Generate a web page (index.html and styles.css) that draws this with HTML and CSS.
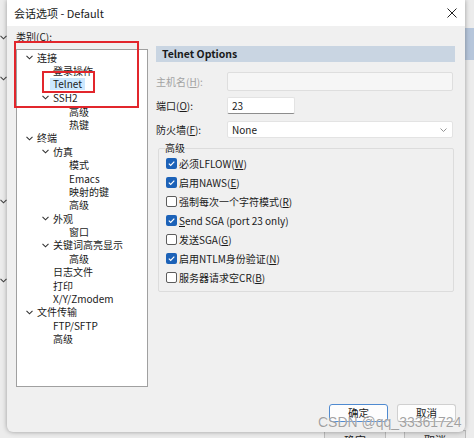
FILE: index.html
```html
<!DOCTYPE html>
<html lang="zh-CN">
<head>
    <meta charset="UTF-8">
    <meta name="viewport" content="width=device-width, initial-scale=1.0">
    <title>会话选项 - Default</title>
    <link rel="stylesheet" href="styles.css">
</head>
<body>
    <!-- window behind the dialog -->
    <div class="parent">
        <div class="parent_side">
            <svg class="pchev" style="margin-top:35px" width="7" height="5" viewBox="0 0 7 5"><path d="M0.5 0.8 L3.5 3.8 L6.5 0.8" fill="none" stroke="#444" stroke-width="1.1"/></svg>
            <svg class="pchev" style="margin-top:36px" width="7" height="5" viewBox="0 0 7 5"><path d="M0.5 0.8 L3.5 3.8 L6.5 0.8" fill="none" stroke="#444" stroke-width="1.1"/></svg>
            <svg class="pchev" style="margin-top:118px" width="7" height="5" viewBox="0 0 7 5"><path d="M0.5 0.8 L3.5 3.8 L6.5 0.8" fill="none" stroke="#444" stroke-width="1.1"/></svg>
            <svg class="pchev" style="margin-top:74px" width="7" height="5" viewBox="0 0 7 5"><path d="M0.5 0.8 L3.5 3.8 L6.5 0.8" fill="none" stroke="#444" stroke-width="1.1"/></svg>
        </div>
        <div class="parent_right">
            <div class="parent_band"></div>
        </div>
        <div class="parent_buttons">
            <span class="pbtn">确定</span>
            <span class="pbtn">取消</span>
        </div>
    </div>

    <div class="dialog">
        <div class="titlebar">
            <span class="title">会话选项 - Default</span>
            <svg class="close" width="10" height="10" viewBox="0 0 10 10"><path d="M0.5 0.5 L9.5 9.5 M9.5 0.5 L0.5 9.5" stroke="#222" stroke-width="1"/></svg>
        </div>

        <div class="body">
            <div class="left_col">
                <div class="cat_label">类别(<u>C</u>):</div>
                <div class="tree">
                    <div class="row lv0"><span class="twisty"><svg width="7" height="5" viewBox="0 0 7 5"><path d="M0.5 0.8 L3.5 3.8 L6.5 0.8" fill="none" stroke="#333" stroke-width="1.1"/></svg></span>连接</div>
                    <div class="row lv1"><span class="twisty"></span>登录操作</div>
                    <div class="row lv1"><span class="twisty"></span><span class="selected">Telnet</span></div>
                    <div class="row lv1"><span class="twisty"><svg width="7" height="5" viewBox="0 0 7 5"><path d="M0.5 0.8 L3.5 3.8 L6.5 0.8" fill="none" stroke="#333" stroke-width="1.1"/></svg></span>SSH2</div>
                    <div class="row lv2"><span class="twisty"></span>高级</div>
                    <div class="row lv2"><span class="twisty"></span>热键</div>
                    <div class="row lv0"><span class="twisty"><svg width="7" height="5" viewBox="0 0 7 5"><path d="M0.5 0.8 L3.5 3.8 L6.5 0.8" fill="none" stroke="#333" stroke-width="1.1"/></svg></span>终端</div>
                    <div class="row lv1"><span class="twisty"><svg width="7" height="5" viewBox="0 0 7 5"><path d="M0.5 0.8 L3.5 3.8 L6.5 0.8" fill="none" stroke="#333" stroke-width="1.1"/></svg></span>仿真</div>
                    <div class="row lv2"><span class="twisty"></span>模式</div>
                    <div class="row lv2"><span class="twisty"></span>Emacs</div>
                    <div class="row lv2"><span class="twisty"></span>映射的键</div>
                    <div class="row lv2"><span class="twisty"></span>高级</div>
                    <div class="row lv1"><span class="twisty"><svg width="7" height="5" viewBox="0 0 7 5"><path d="M0.5 0.8 L3.5 3.8 L6.5 0.8" fill="none" stroke="#333" stroke-width="1.1"/></svg></span>外观</div>
                    <div class="row lv2"><span class="twisty"></span>窗口</div>
                    <div class="row lv1"><span class="twisty"><svg width="7" height="5" viewBox="0 0 7 5"><path d="M0.5 0.8 L3.5 3.8 L6.5 0.8" fill="none" stroke="#333" stroke-width="1.1"/></svg></span>关键词高亮显示</div>
                    <div class="row lv2"><span class="twisty"></span>高级</div>
                    <div class="row lv1"><span class="twisty"></span>日志文件</div>
                    <div class="row lv1"><span class="twisty"></span>打印</div>
                    <div class="row lv1"><span class="twisty"></span>X/Y/Zmodem</div>
                    <div class="row lv0"><span class="twisty"><svg width="7" height="5" viewBox="0 0 7 5"><path d="M0.5 0.8 L3.5 3.8 L6.5 0.8" fill="none" stroke="#333" stroke-width="1.1"/></svg></span>文件传输</div>
                    <div class="row lv1"><span class="twisty"></span>FTP/SFTP</div>
                    <div class="row lv1"><span class="twisty"></span>高级</div>
                </div>
            </div>

            <div class="right_col">
                <div class="section_head">Telnet Options</div>
                <div class="field disabled">
                    <span class="field_label">主机名(<u>H</u>):</span>
                    <span class="input wide off"></span>
                </div>
                <div class="field">
                    <span class="field_label">端口(<u>O</u>):</span>
                    <span class="input port">23</span>
                </div>
                <div class="field">
                    <span class="field_label">防火墙(<u>F</u>):</span>
                    <span class="input wide select">None
                        <svg width="7" height="4" viewBox="0 0 7 4"><path d="M0.5 0.5 L3.5 3.5 L6.5 0.5" fill="none" stroke="#888" stroke-width="0.9"/></svg>
                    </span>
                </div>
                <fieldset class="group">
                    <legend>高级</legend>
                    <div class="check"><span class="box on"><svg width="11" height="11" viewBox="0 0 11 11"><path d="M2.8 5.6 L4.7 7.4 L8.3 3.7" fill="none" stroke="#fff" stroke-width="1.2"/></svg></span>必须LFLOW(<u>W</u>)</div>
                    <div class="check"><span class="box on"><svg width="11" height="11" viewBox="0 0 11 11"><path d="M2.8 5.6 L4.7 7.4 L8.3 3.7" fill="none" stroke="#fff" stroke-width="1.2"/></svg></span>启用NAWS(<u>E</u>)</div>
                    <div class="check"><span class="box"></span>强制每次一个字符模式(<u>R</u>)</div>
                    <div class="check"><span class="box on"><svg width="11" height="11" viewBox="0 0 11 11"><path d="M2.8 5.6 L4.7 7.4 L8.3 3.7" fill="none" stroke="#fff" stroke-width="1.2"/></svg></span><u>S</u>end SGA (port 23 only)</div>
                    <div class="check"><span class="box"></span>发送SGA(<u>G</u>)</div>
                    <div class="check"><span class="box on"><svg width="11" height="11" viewBox="0 0 11 11"><path d="M2.8 5.6 L4.7 7.4 L8.3 3.7" fill="none" stroke="#fff" stroke-width="1.2"/></svg></span>启用NTLM身份验证(<u>N</u>)</div>
                    <div class="check"><span class="box"></span>服务器请求空CR(<u>B</u>)</div>
                </fieldset>
            </div>
        </div>

        <div class="footer">
            <span class="button default">确定</span>
            <span class="button">取消</span>
        </div>
    </div>

    <!-- annotations drawn over the screenshot -->
    <div class="mark outer"></div>
    <div class="mark inner"></div>
    <div class="watermark">CSDN @qq_33361724</div>
</body>
</html>
```

FILE: styles.css
```css
body
{
    margin: 0;
    width: 474px;
    height: 438px;
    overflow: hidden;
    position: relative;
    background-color: #e6e6e6;
    font-family: "Noto Sans CJK SC", "Noto Sans", sans-serif;
    font-size: 10px;
    color: #1a1a1a;
}
u
{
    text-underline-offset: 1px;
}

/* window behind */
.parent
{
    height: 438px;
    display: flex;
    position: relative;
    background-color: #ececec;
}
.parent_side
{
    width: 7px;
    display: flex;
    flex-direction: column;
}
.pchev
{
    display: block;
    margin-left: 0;
}
.parent_right
{
    margin-left: auto;
    width: 9px;
    padding-top: 28px;
}
.parent_band
{
    height: 32px;
    background-color: #b6c6db;
}
.parent_buttons
{
    position: absolute;
    right: 0;
    bottom: -12px;
    display: flex;
    gap: 18px;
    padding-right: 8px;
}
.pbtn
{
    width: 60px;
    height: 18px;
    line-height: 18px;
    text-align: center;
    font-size: 11px;
    background-color: #e2e2e2;
    border: 1px solid #bbbbbb;
}

/* dialog */
.dialog
{
    position: absolute;
    left: 7px;
    top: 0;
    width: 458px;
    height: 432px;
    background-color: #f0f0f0;
    border-radius: 0 0 6px 6px;
    box-shadow: 0 0 5px rgba(0, 0, 0, 0.35);
}
.titlebar
{
    height: 26px;
    display: flex;
    align-items: center;
    padding: 0 8px 0 7px;
    background-color: #ffffff;
}
.title
{
    font-size: 11px;
    color: #1a1a1a;
}
.close
{
    margin-left: auto;
}
.body
{
    display: flex;
    padding: 5px 0 0 9px;
}
.left_col
{
    width: 132px;
}
.cat_label
{
    height: 18px;
    line-height: 12px;
}
.tree
{
    height: 335px;
    border: 1px solid #a0a0a0;
    background-color: #ffffff;
    padding-top: 1px;
}
.row
{
    height: 13.4px;
    line-height: 13.4px;
    display: flex;
    align-items: center;
    white-space: nowrap;
}
.twisty
{
    width: 16px;
    height: 13px;
    display: flex;
    align-items: center;
    justify-content: center;
}
.lv0
{
    padding-left: 4px;
}
.lv1
{
    padding-left: 20px;
}
.lv2
{
    padding-left: 36px;
}
.selected
{
    background-color: #cce8ff;
    line-height: 12px;
    margin-left: -3px;
    padding: 0 3px;
}

.right_col
{
    width: 299px;
    margin-left: 8px;
}
.section_head
{
    margin-top: 15px;
    height: 16px;
    line-height: 16px;
    padding-left: 6px;
    font-size: 10.5px;
    font-weight: bold;
    background-color: #c9d5e2;
}
.field
{
    display: flex;
    align-items: center;
    margin-top: 6px;
}
.field.disabled
{
    margin-top: 10px;
    color: #a3a3a3;
}
.field:last-of-type
{
    margin-top: 7px;
}
.field_label
{
    width: 71px;
}
.input
{
    height: 17px;
    box-sizing: border-box;
    line-height: 15px;
    padding-left: 4px;
    background-color: #ffffff;
    border: 1px solid #e3e3e3;
    border-bottom-color: #8d8d8d;
    border-radius: 2px;
}
.wide
{
    width: 226px;
}
.off
{
    height: 19px;
    background-color: #f6f6f6;
    border: 1px solid #dedede;
}
.port
{
    width: 68px;
}
.select
{
    display: flex;
    align-items: center;
    justify-content: space-between;
    padding-right: 5px;
    border-bottom-color: #e3e3e3;
}

.group
{
    margin: 4px 0 0 2px;
    width: 296px;
    box-sizing: border-box;
    padding: 0 6px 4px 6px;
    border: 1px solid #dcdcdc;
    border-radius: 2px;
}
.group legend
{
    padding: 0;
    line-height: 12px;
}
.check
{
    height: 19px;
    display: flex;
    align-items: center;
    white-space: nowrap;
}
.box
{
    width: 11px;
    height: 11px;
    box-sizing: border-box;
    margin: 0 2px 0 1px;
    border: 1px solid #5c5c5c;
    border-radius: 2px;
    background-color: #ffffff;
}
.box.on
{
    border: none;
    background-color: #1c62b8;
}
.box svg
{
    display: block;
}

.footer
{
    display: flex;
    justify-content: flex-end;
    gap: 9px;
    margin-top: 17px;
    padding-right: 9px;
}
.button
{
    width: 59px;
    height: 18px;
    box-sizing: border-box;
    line-height: 16px;
    text-align: center;
    font-size: 10.5px;
    background-color: #fdfdfd;
    border: 1px solid #d0d0d0;
    border-bottom-color: #b0b0b0;
    border-radius: 3px;
}
.button.default
{
    border: 1px solid #4f8ad0;
}

/* annotations */
.mark
{
    position: absolute;
    border: 2px solid #e2262c;
    box-sizing: border-box;
}
.outer
{
    left: 14px;
    top: 41px;
    width: 125px;
    height: 67px;
}
.inner
{
    left: 42px;
    top: 71px;
    width: 53px;
    height: 22px;
}
.watermark
{
    position: absolute;
    left: 318px;
    top: 414px;
    font-family: "Liberation Sans", sans-serif;
    font-size: 14px;
    color: rgba(130, 130, 130, 0.75);
    text-shadow: 0 0 1px #ffffff;
    white-space: nowrap;
}
```
